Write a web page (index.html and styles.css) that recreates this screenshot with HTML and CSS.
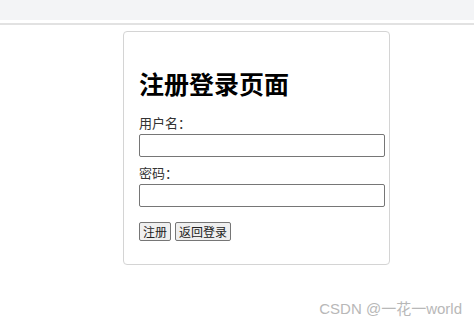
FILE: index.html
```html
<!DOCTYPE html>
<html lang="zh">
<head>
    <meta charset="UTF-8">
    <title>注册登录页面</title>
    <link rel="stylesheet" href="styles.css">
</head>
<body>

<div class="topbar"></div>

<div class="container">
    <h2>注册登录页面</h2>
    <form id="registerForm">
        <label for="username">用户名：</label>
        <input type="text" id="username">

        <label for="password">密码：</label>
        <input type="password" id="password">

        <div class="actions">
            <button type="button">注册</button>
            <button type="button">返回登录</button>
        </div>
    </form>
</div>

<div class="watermark">CSDN @一花一world</div>

</body>
</html>
```

FILE: styles.css
```css
body {
    font-family: "Noto Sans CJK SC", "Noto Sans", sans-serif;
    margin: 0;
    background-color: white;
    height: 323px;
    overflow: hidden;
    position: relative;
}
.topbar {
    height: 20px;
    background-color: #f3f4f6;
    border-bottom: 3px solid white;
    box-shadow: 0 2px 0 #e2e2e2;
}
.container {
    width: 250px;
    margin: 8px 0 0 123px;
    padding: 0 0 0 15px;
    height: 232px;
    border: 1px solid #d4d4d4;
    border-radius: 4px;
}
h2 {
    margin: 31px 0 0;
    font-size: 25px;
    font-weight: bold;
    line-height: 40px;
    color: black;
}
form {
    display: flex;
    flex-direction: column;
}
label {
    margin: 10px 0 2px;
    font-size: 13px;
    line-height: 19px;
    color: #333;
}
label + input + label {
    margin-top: 6px;
}
input {
    width: 240px;
    height: 17px;
    margin: 0;
    padding: 2px;
    border: 1px solid #767676;
    border-radius: 2px;
}
.actions {
    display: flex;
    gap: 4px;
    margin-top: 15px;
}
button {
    font-family: "Noto Sans CJK SC", sans-serif;
    font-size: 12px;
    line-height: 14px;
    padding: 1px 3px;
    height: 19px;
    color: #222;
    background-color: #efefef;
    border: 1px solid #767676;
    border-radius: 2px;
}
.watermark {
    position: absolute;
    right: 12px;
    bottom: 5px;
    font-family: "Liberation Sans", "Noto Sans CJK SC", sans-serif;
    font-size: 15px;
    color: #b8b8b8;
}
```
